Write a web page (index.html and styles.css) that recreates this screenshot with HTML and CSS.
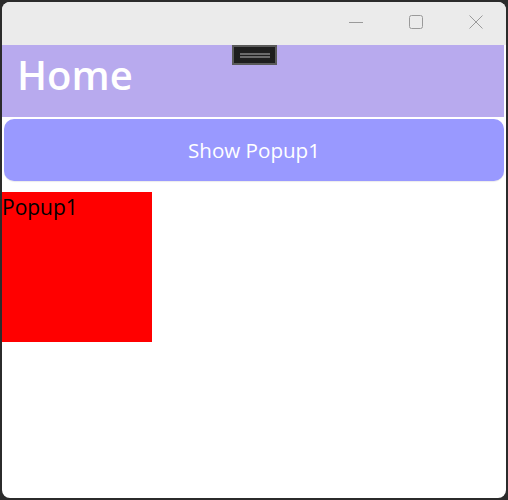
FILE: index.html
```html
<!DOCTYPE html>
<html>
<head>
<meta charset="utf-8">
<link rel="stylesheet" href="styles.css">
</head>
<body>
<div class="window">
  <div class="titlebar">
    <div class="caption-btn">
      <svg width="16" height="16" viewBox="0 0 16 16"><line x1="1" y1="8.5" x2="15" y2="8.5" stroke="#9a9a9a" stroke-width="1"/></svg>
    </div>
    <div class="caption-btn">
      <svg width="16" height="16" viewBox="0 0 16 16"><rect x="1.5" y="1.5" width="13" height="13" rx="2" fill="none" stroke="#9a9a9a" stroke-width="1"/></svg>
    </div>
    <div class="caption-btn">
      <svg width="16" height="16" viewBox="0 0 16 16"><path d="M1.5 1.5 L14.5 14.5 M14.5 1.5 L1.5 14.5" stroke="#9a9a9a" stroke-width="1"/></svg>
    </div>
  </div>
  <div class="header">
    <h1 class="title">Home</h1>
    <div class="handle"><span class="grip"></span><span class="grip"></span></div>
  </div>
  <div class="content">
    <button class="show-btn">Show Popup1</button>
    <div class="popup">Popup1</div>
  </div>
</div>
</body>
</html>
```
FILE: styles.css
```css
html, body {
  margin: 0;
  padding: 0;
}
body {
  background: #2b2b2b;
  width: 508px;
  height: 500px;
  overflow: hidden;
  font-family: "Open Sans", "Noto Sans", sans-serif;
}
.window {
  margin: 2px;
  width: 504px;
  height: 496px;
  background: #ffffff;
  border-radius: 8px;
  overflow: hidden;
  display: flex;
  flex-direction: column;
}
.titlebar {
  height: 43px;
  background: #ebebeb;
  display: flex;
  justify-content: flex-end;
  align-items: center;
  padding-right: 22px;
  gap: 44px;
  flex-shrink: 0;
}
.caption-btn {
  width: 16px;
  height: 16px;
  display: flex;
  margin-bottom: 4px;
}
.header {
  position: relative;
  height: 72px;
  background: #b8aaee;
  margin-right: 2px;
  display: flex;
  align-items: center;
  padding-left: 15px;
  flex-shrink: 0;
}
.title {
  margin: 0;
  color: #ffffff;
  font-size: 40px;
  font-weight: 600;
  line-height: 1;
  margin-top: -12px;
}
.handle {
  position: absolute;
  left: 230px;
  top: 0;
  width: 41px;
  height: 16px;
  background: #1e1e1e;
  border: 2px solid #5a5a5a;
  display: flex;
  flex-direction: column;
  justify-content: center;
  align-items: center;
  gap: 1px;
}
.grip {
  display: block;
  width: 30px;
  height: 2px;
  background: #6a6a6a;
}
.content {
  flex: 1;
  display: flex;
  flex-direction: column;
  align-items: flex-start;
}
.show-btn {
  margin: 2px 2px 0 2px;
  width: 500px;
  height: 62px;
  border: none;
  border-radius: 10px;
  background: #9999ff;
  color: #ffffff;
  font-family: "Open Sans", "Noto Sans", sans-serif;
  font-size: 20.6px;
  box-shadow: 0 1px 1px rgba(0,0,0,0.08);
  padding: 0;
}
.popup {
  margin-top: 11px;
  width: 150px;
  height: 150px;
  background: #ff0000;
  color: #000000;
  font-size: 21px;
  line-height: 1.5;
}
```
